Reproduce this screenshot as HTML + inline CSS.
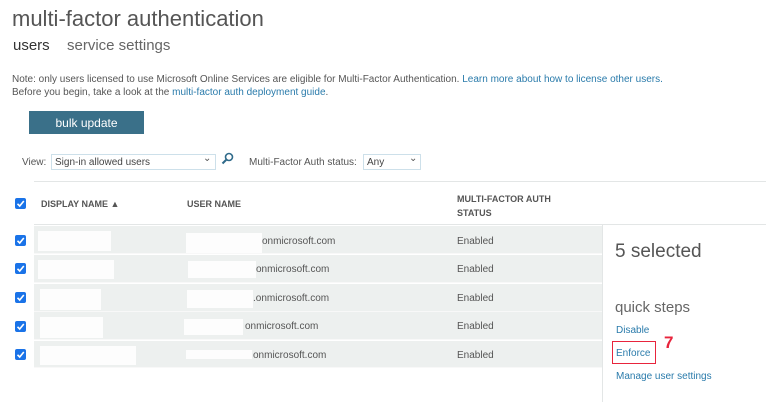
<!DOCTYPE html>
<html><head><style>
*{margin:0;padding:0;box-sizing:border-box}
body{width:768px;height:402px;background:#fff;font-family:"Liberation Sans","DejaVu Sans",sans-serif;color:#444;position:relative;overflow:hidden}
.a{position:absolute;white-space:nowrap}
.lnk{color:#2a7bab}
.cb{position:absolute;width:11px;height:11px;background:#1a73e8;border-radius:2px}
.cb svg{position:absolute;left:1px;top:1px}
.row{position:absolute;left:34px;width:568px;height:28px;background:#edf0ef;border-bottom:1px solid #f8f8f8}
.wb{position:absolute;background:#fdfdfd}
.sm{font-size:10px;color:#555}
</style></head><body>
<div class="a" style="left:12px;top:6px;font-size:22px;color:#555">multi-factor authentication</div>
<div class="a" style="left:13px;top:37px;font-size:15px;color:#333">users</div>
<div class="a" style="left:67px;top:37px;font-size:15px;color:#666">service settings</div>
<div class="a" style="left:12px;top:74px;font-size:10px;color:#555">Note: only users licensed to use Microsoft Online Services are eligible for Multi-Factor Authentication. <span class="lnk">Learn more about how to license other users.</span></div>
<div class="a" style="left:12px;top:87px;font-size:10px;color:#555">Before you begin, take a look at the <span class="lnk">multi-factor auth deployment guide</span>.</div>
<div class="a" style="left:29px;top:111px;width:115px;height:23px;background:#3a7089;color:#fff;font-size:12px;text-align:center;line-height:24px">bulk update</div>
<div class="a sm" style="left:22px;top:157px">View:</div>
<div class="a" style="left:51px;top:154px;width:165px;height:16px;border:1px solid #cde0ea;font-size:10px;color:#444;padding:2px 3px">Sign-in allowed users</div>
<div class="a" style="left:203px;top:153px;font-size:10px;color:#555">⌄</div>
<svg class="a" style="left:221px;top:152px" width="13" height="13"><circle cx="8" cy="5" r="3.5" fill="none" stroke="#2f6a8a" stroke-width="1.6"/><line x1="5.5" y1="7.5" x2="1.5" y2="11.5" stroke="#2f6a8a" stroke-width="2"/></svg>
<div class="a sm" style="left:249px;top:157px">Multi-Factor Auth status:</div>
<div class="a" style="left:363px;top:154px;width:58px;height:16px;border:1px solid #cde0ea;font-size:10px;color:#444;padding:2px 3px">Any</div>
<div class="a" style="left:409px;top:153px;font-size:10px;color:#555">⌄</div>
<div class="a" style="left:34px;top:181px;width:732px;height:1px;background:#e3e6e6"></div>
<div class="cb" style="left:15px;top:198px"><svg width="9" height="9"><path d="M1.5 4.8L3.7 7 7.8 2" fill="none" stroke="#fff" stroke-width="1.6"/></svg></div>
<div class="a" style="left:41px;top:199px;font-size:9px;font-weight:bold;color:#555">DISPLAY NAME ▲</div>
<div class="a" style="left:187px;top:199px;font-size:9px;font-weight:bold;color:#555">USER NAME</div>
<div class="a" style="left:457px;top:192px;font-size:9px;font-weight:bold;color:#555;line-height:14px">MULTI-FACTOR AUTH<br>STATUS</div>
<div class="a" style="left:34px;top:224px;width:732px;height:1px;background:#e3e6e6"></div>
<div class="row" style="top:226px"></div>
<div class="row" style="top:255px"></div>
<div class="row" style="top:284px"></div>
<div class="row" style="top:312px"></div>
<div class="row" style="top:341px;height:27px"></div>
<div class="a" style="left:602px;top:225px;width:1px;height:177px;background:#e3e6e6"></div>
<div class="wb" style="left:38px;top:231px;width:73px;height:20px"></div>
<div class="wb" style="left:38px;top:260px;width:76px;height:19px"></div>
<div class="wb" style="left:40px;top:289px;width:61px;height:21px"></div>
<div class="wb" style="left:40px;top:317px;width:63px;height:21px"></div>
<div class="wb" style="left:40px;top:346px;width:96px;height:19px"></div>
<div class="wb" style="left:186px;top:233px;width:76px;height:20px"></div>
<div class="wb" style="left:188px;top:261px;width:68px;height:17px"></div>
<div class="wb" style="left:187px;top:290px;width:66px;height:18px"></div>
<div class="wb" style="left:184px;top:319px;width:59px;height:16px"></div>
<div class="wb" style="left:186px;top:350px;width:66px;height:9px"></div>
<div class="a sm" style="left:262px;top:236px">onmicrosoft.com</div>
<div class="a sm" style="left:256px;top:264px">onmicrosoft.com</div>
<div class="a sm" style="left:253px;top:293px">.onmicrosoft.com</div>
<div class="a sm" style="left:245px;top:321px">onmicrosoft.com</div>
<div class="a sm" style="left:253px;top:350px">onmicrosoft.com</div>
<div class="a sm" style="left:457px;top:236px">Enabled</div>
<div class="a sm" style="left:457px;top:264px">Enabled</div>
<div class="a sm" style="left:457px;top:293px">Enabled</div>
<div class="a sm" style="left:457px;top:321px">Enabled</div>
<div class="a sm" style="left:457px;top:350px">Enabled</div>
<div class="cb" style="left:15px;top:235px"><svg width="9" height="9"><path d="M1.5 4.8L3.7 7 7.8 2" fill="none" stroke="#fff" stroke-width="1.6"/></svg></div>
<div class="cb" style="left:15px;top:263px"><svg width="9" height="9"><path d="M1.5 4.8L3.7 7 7.8 2" fill="none" stroke="#fff" stroke-width="1.6"/></svg></div>
<div class="cb" style="left:15px;top:292px"><svg width="9" height="9"><path d="M1.5 4.8L3.7 7 7.8 2" fill="none" stroke="#fff" stroke-width="1.6"/></svg></div>
<div class="cb" style="left:15px;top:321px"><svg width="9" height="9"><path d="M1.5 4.8L3.7 7 7.8 2" fill="none" stroke="#fff" stroke-width="1.6"/></svg></div>
<div class="cb" style="left:15px;top:349px"><svg width="9" height="9"><path d="M1.5 4.8L3.7 7 7.8 2" fill="none" stroke="#fff" stroke-width="1.6"/></svg></div>
<div class="a" style="left:615px;top:241px;font-size:19px;color:#555">5 selected</div>
<div class="a" style="left:615px;top:299px;font-size:15px;color:#666">quick steps</div>
<div class="a lnk" style="left:616px;top:325px;font-size:10px">Disable</div>
<div class="a" style="left:612px;top:341px;width:44px;height:23px;border:1.5px solid #e8243c"></div>
<div class="a lnk" style="left:616px;top:348px;font-size:10px">Enforce</div>
<div class="a" style="left:664px;top:333px;font-size:17px;font-weight:bold;color:#e8243c">7</div>
<div class="a lnk" style="left:616px;top:371px;font-size:10px">Manage user settings</div>
</body></html>
